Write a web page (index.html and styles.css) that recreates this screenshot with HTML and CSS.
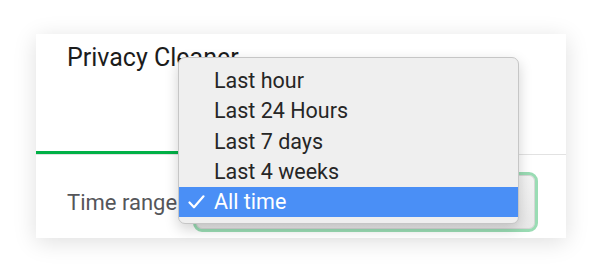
FILE: index.html
```html
<!DOCTYPE html>
<html>
<head>
<meta charset="utf-8">
<link rel="stylesheet" href="styles.css">
</head>
<body>
<div class="stage">
  <div class="card">
    <div class="tabs">
      <div class="tab">Privacy Cleaner</div>
    </div>
    <div class="divider"><div class="indicator"></div></div>
    <div class="row">
      <span class="label">Time range</span>
      <div class="select"><span class="arrow"></span></div>
    </div>
  </div>
  <ul class="menu">
    <li>Last hour</li>
    <li>Last 24 Hours</li>
    <li>Last 7 days</li>
    <li>Last 4 weeks</li>
    <li class="active"><svg class="check" width="17" height="14" viewBox="0 0 17 14"><path d="M1.5 7.5 L6 12.3 L15.5 1.3" fill="none" stroke="#ffffff" stroke-width="2.2" stroke-linecap="round" stroke-linejoin="round"/></svg>All time</li>
  </ul>
</div>
</body>
</html>
```
FILE: styles.css
```css
html, body {
  margin: 0;
  padding: 0;
  background: #ffffff;
}
.stage {
  position: relative;
  width: 600px;
  height: 272px;
  padding: 34px 0 0 36px;
  box-sizing: border-box;
}
.card {
  width: 530px;
  height: 204px;
  background: #ffffff;
  box-shadow: 0 4px 22px rgba(0, 0, 0, 0.13);
  display: flex;
  flex-direction: column;
}
.tabs {
  height: 117px;
  display: flex;
}
.tab {
  font-family: Roboto, "Liberation Sans", sans-serif;
  font-size: 25px;
  color: #1c1c1c;
  padding: 9px 0 0 31px;
  line-height: 30px;
}
.divider {
  height: 4px;
  border-bottom: 1px solid #e2e2e2;
  box-sizing: border-box;
}
.indicator {
  width: 260px;
  height: 3px;
  background: #00b046;
}
.row {
  display: flex;
  align-items: center;
  padding: 17px 0 0 31px;
  gap: 16px;
}
.label {
  font-family: Roboto, "Liberation Sans", sans-serif;
  font-size: 22px;
  color: #55565a;
}
.select {
  width: 345px;
  height: 60px;
  box-sizing: border-box;
  border: 3px solid #9adcb4;
  border-radius: 9px;
  background: linear-gradient(#f3f3f3, #e9e9e9);
  box-shadow: inset 0 0 0 1px #d6d6d6;
  position: relative;
}
.arrow {
  position: absolute;
  right: 16px;
  top: 25px;
  width: 0;
  height: 0;
  border-left: 3px solid transparent;
  border-right: 3px solid transparent;
  border-top: 4px solid #333;
}
.menu {
  position: absolute;
  left: 178px;
  top: 57px;
  width: 341px;
  margin: 0;
  padding: 8px 0 6px;
  list-style: none;
  box-sizing: border-box;
  background: #efefef;
  border: 1px solid #c6c6c6;
  border-radius: 7px;
  box-shadow: 0 5px 14px rgba(0, 0, 0, 0.18);
  font-family: Roboto, sans-serif;
  font-size: 21.5px;
  color: #262626;
}
.menu li {
  height: 30.3px;
  line-height: 30px;
  padding-left: 35px;
  position: relative;
}
.menu li.active {
  background: #4a8ff6;
  color: #ffffff;
}
.check {
  position: absolute;
  left: 9px;
  top: 8px;
}
```
